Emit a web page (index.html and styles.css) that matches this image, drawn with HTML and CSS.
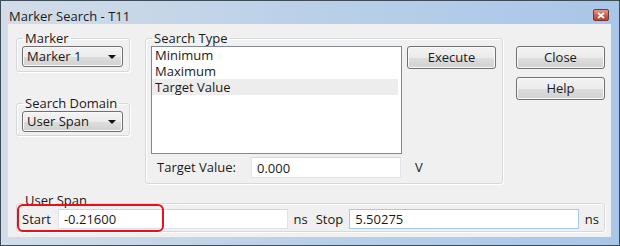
FILE: index.html
```html
<!DOCTYPE html>
<html lang="en">
	<head>
		<meta charset="UTF-8" />
		<title>Marker Search - T11</title>
		<link rel="stylesheet" href="styles.css">
	</head>
	<body>
		<div class="window">
			<div class="titlebar">
				<span class="title">Marker Search - T11</span>
				<span class="close-x">
					<svg width="8" height="7" viewBox="0 0 8 7"><path d="M1 1 L7 6 M7 1 L1 6" stroke="#fff" stroke-width="1.8" /></svg>
				</span>
			</div>

			<div class="client">
				<div class="top-row">
					<!-- left: marker + domain -->
					<div class="left-col">
						<fieldset class="group group-marker">
							<legend>Marker</legend>
							<div class="combo"><span>Marker 1</span><i class="arrow"></i></div>
						</fieldset>
						<fieldset class="group group-domain">
							<legend>Search Domain</legend>
							<div class="combo"><span>User Span</span><i class="arrow"></i></div>
						</fieldset>
					</div>

					<!-- search type -->
					<fieldset class="group group-type">
						<legend>Search Type</legend>
						<div class="type-grid">
							<ul class="listbox">
								<li>Minimum</li>
								<li>Maximum</li>
								<li class="selected">Target Value</li>
							</ul>
							<button class="btn">Execute</button>
						</div>
						<div class="target-row">
							<label class="target-label">Target Value:</label>
							<input class="field target-input" type="text" value="0.000">
							<span class="unit">V</span>
						</div>
					</fieldset>

					<div class="right-col">
						<button class="btn">Close</button>
						<button class="btn">Help</button>
					</div>
				</div>

				<fieldset class="group group-span">
					<legend>User Span</legend>
					<div class="span-row">
						<span class="span-label">Start</span>
						<input class="field span-input" type="text" value="-0.21600">
						<span class="span-unit">ns</span>
						<span class="span-label stop-label">Stop</span>
						<input class="field span-input focused" type="text" value="5.50275">
						<span class="span-unit">ns</span>
						<div class="highlight"></div>
					</div>
				</fieldset>
			</div>
		</div>
	</body>
</html>
```

FILE: styles.css
```css
* {
	box-sizing: border-box;
}

body {
	margin: 0;
	font-family: "Open Sans", "Noto Sans", sans-serif;
	font-size: 13px;
	line-height: 15px;
	color: #1a1a1a;
	background-color: #fff;
}

/* 視窗外框 */
.window {
	width: 620px;
	height: 246px;
	border: 1px solid #3e4c59;
	background: linear-gradient(to right, #d3dde8 0%, #bcd1e8 45%, #a9c6e8 100%);
	display: flex;
	flex-direction: column;
}

.titlebar {
	height: 23px;
	padding: 8px 10px 0 8px;
	display: flex;
	align-items: flex-start;
	justify-content: space-between;
}

.close-x {
	width: 16px;
	height: 12px;
	border: 1px solid #6e3b33;
	border-radius: 2px;
	background: linear-gradient(#e59a8a 0%, #d0604c 50%, #bd3f2a 100%);
	display: flex;
	align-items: center;
	justify-content: center;
}

.client {
	flex: 1;
	margin: 0 8px 8px 7px;
	padding: 7px 6px 5px 8px;
	background-color: #f0f0f0;
}

.top-row {
	display: flex;
	align-items: flex-start;
}

/* 群組框 */
.group {
	margin: 0;
	min-width: 0;
	border: 1px solid #d5d9dd;
	border-radius: 3px;
	box-shadow: inset 1px 1px 0 #fff, 1px 1px 0 #fff;
}

.group legend {
	padding: 0 2px;
	margin-left: 1px;
	line-height: 15px;
}

.left-col {
	width: 114px;
	display: flex;
	flex-direction: column;
}

.group-marker,
.group-domain {
	padding: 0 6px 4px 5px;
}

.group-domain {
	margin-top: 24px;
	padding-bottom: 3px;
}

.combo {
	height: 21px;
	padding: 0 6px 0 4px;
	border: 1px solid #707070;
	border-radius: 3px;
	background: linear-gradient(#f3f3f3 0%, #ebebeb 50%, #dddddd 51%, #d1d1d1 100%);
	box-shadow: inset 0 0 0 1px #fafafa;
	display: flex;
	align-items: center;
	justify-content: space-between;
	line-height: 19px;
}

.arrow {
	width: 0;
	height: 0;
	border-left: 4px solid transparent;
	border-right: 4px solid transparent;
	border-top: 4px solid #111;
}

.group-type {
	width: 358px;
	margin-left: 15px;
	padding: 0 6px 5px 5px;
}

.type-grid {
	display: grid;
	grid-template-columns: 251px 89px;
	column-gap: 5px;
	align-items: start;
}

.listbox {
	height: 108px;
	margin: 0;
	padding: 0 3px 0 0;
	list-style: none;
	background-color: #fff;
	border: 1px solid #828790;
}

.listbox li {
	height: 16px;
	line-height: 16px;
	padding-left: 3px;
}

.listbox li.selected {
	background-color: #ededed;
}

.btn {
	height: 23px;
	padding: 0;
	font: inherit;
	color: inherit;
	border: 1px solid #707070;
	border-radius: 3px;
	background: linear-gradient(#f3f3f3 0%, #ebebeb 50%, #dddddd 51%, #d1d1d1 100%);
	box-shadow: inset 0 0 0 1px #fafafa;
}

.target-row {
	margin-top: 3px;
	display: flex;
	align-items: center;
}

.target-label {
	width: 94px;
	margin-left: 6px;
}

.field {
	height: 21px;
	padding: 0 5px;
	font: inherit;
	color: inherit;
	background-color: #fff;
	border: 1px solid #e2e3ea;
	border-top-color: #d5d6dc;
	outline: none;
}

.target-input {
	width: 150px;
}

.unit {
	margin-left: 14px;
}

.right-col {
	width: 89px;
	margin-left: 13px;
	padding-top: 15px;
	display: flex;
	flex-direction: column;
	gap: 8px;
}

/* 使用者區間 */
.group-span {
	margin-top: 9px;
	padding: 0 5px 2px 5px;
}

/* 框線落在文字下方 */
.group-span legend {
	height: 21px;
}

.span-row {
	position: relative;
	margin-top: -5px;
	display: flex;
	align-items: center;
}

.span-input {
	flex: 1;
	height: 20px;
	min-width: 0;
	margin: 0 6px 0 7px;
}

.span-input.focused {
	border-color: #a9c9ea;
	margin-left: 6px;
}

.stop-label {
	margin-left: 8px;
}

/* 紅框標示 */
.highlight {
	position: absolute;
	left: -5px;
	top: -5px;
	width: 147px;
	height: 28px;
	border: 2px solid #e8101a;
	border-radius: 6px;
	pointer-events: none;
}
```
